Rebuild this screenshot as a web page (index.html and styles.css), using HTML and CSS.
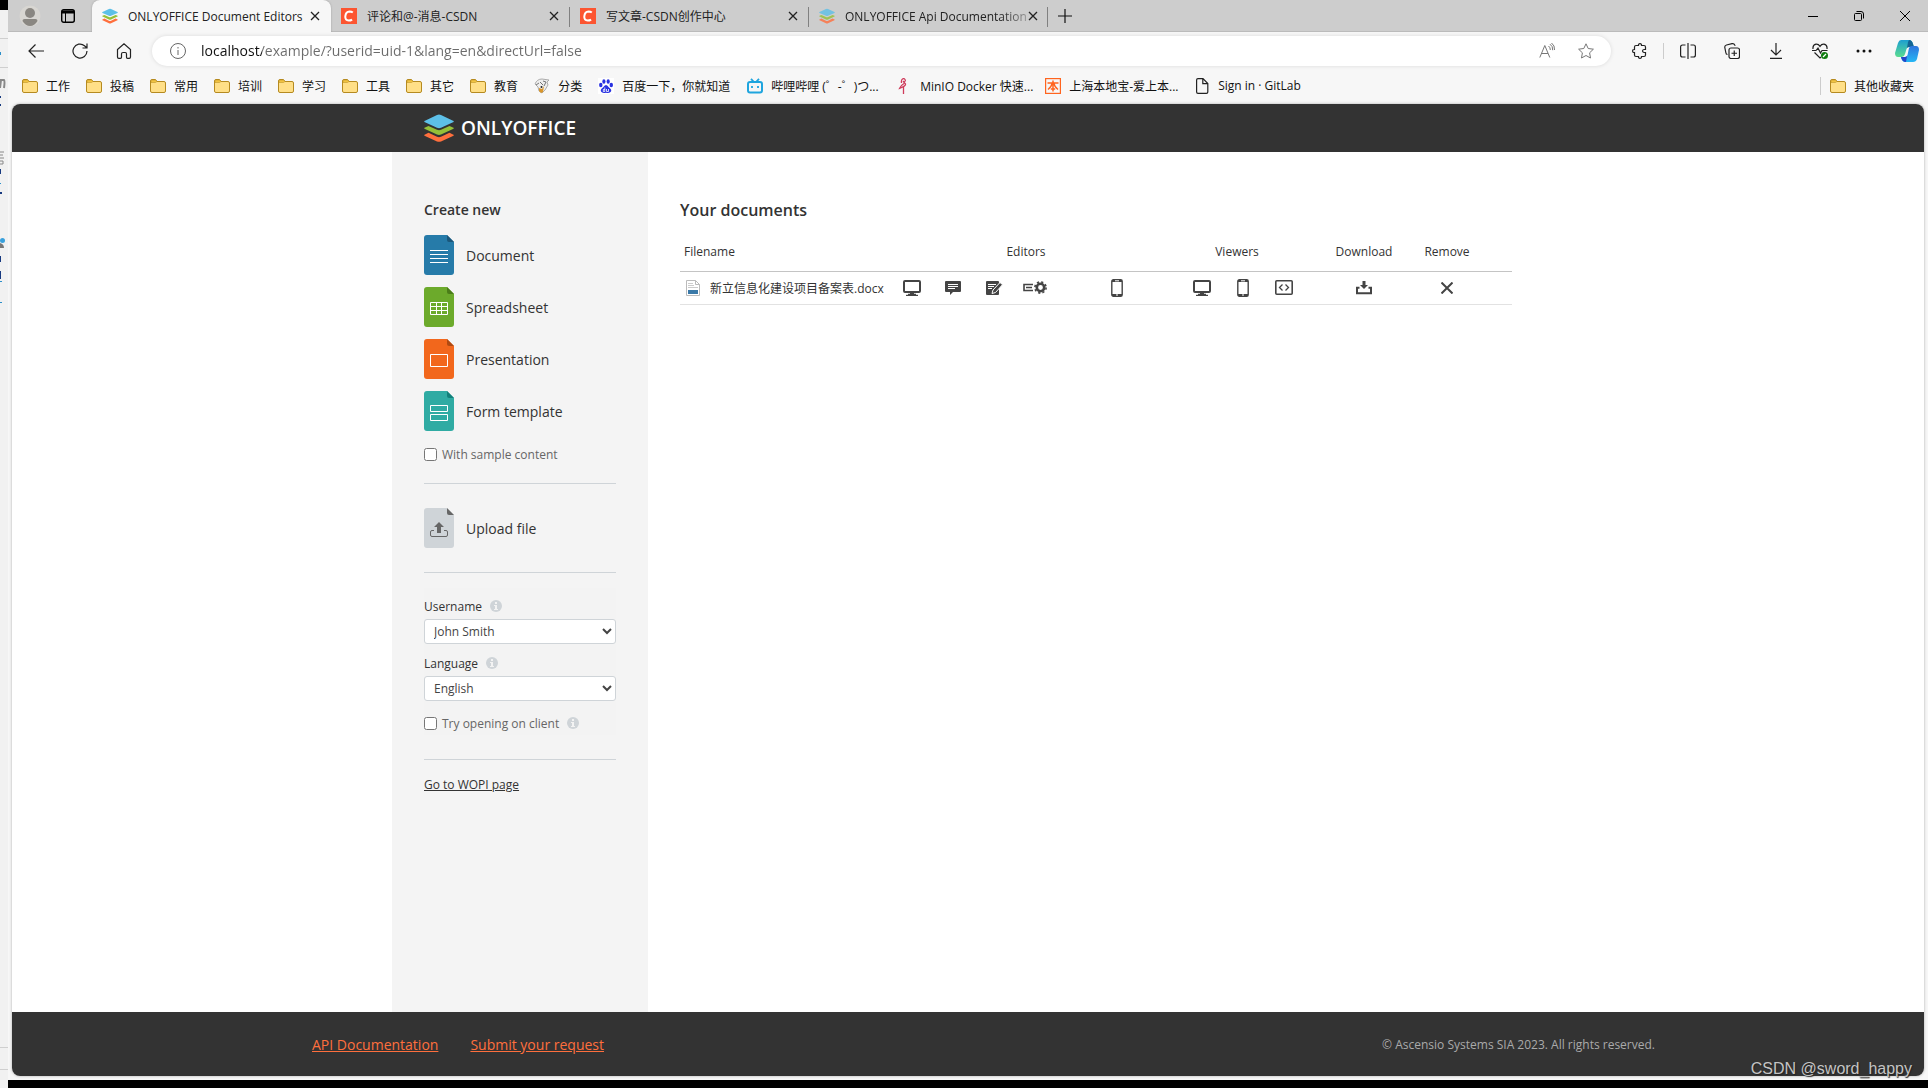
FILE: index.html
```html
<!DOCTYPE html>
<html lang="en">
  <head>
    <meta charset="UTF-8" />
    <meta name="viewport" content="width=device-width, initial-scale=1.0" />
    <title>ONLYOFFICE Document Editors</title>
    <link rel="stylesheet" href="styles.css">
  </head>
  <body>
    <!-- Shared icons -->
    <svg class="sprite" aria-hidden="true">
      <symbol id="stack" viewBox="0 0 30 28">
        <path fill="#ff6f3d" fill-rule="evenodd" d="M13 27.400 1 21.900q-1.500-.800 0-1.500l3.500-1.600 8.500 3.900q2 .900 4 0l8.500-3.900 3.500 1.600q1.500.700 0 1.500l-12 5.500q-2 .900-4 0z" />
        <path fill="#95c038" d="M13 20.500 1 15q-1.500-.800 0-1.500l3.500-1.600 8.500 3.900q2 .900 4 0l8.500-3.900 3.500 1.600q1.500.700 0 1.500l-12 5.500q-2 .900-4 0z" />
        <path fill="#5dc0e8" d="M13 13.700 1 8.200q-1.500-.800 0-1.500L13 1q2-.900 4 0l12 5.700q1.500.700 0 1.500l-12 5.500q-2 .900-4 0z" />
      </symbol>
      <symbol id="close" viewBox="0 0 10 10">
        <path d="M1 1l8 8M9 1l-8 8" fill="none" stroke="#222" stroke-width="1.300" />
      </symbol>
      <symbol id="folder" viewBox="0 0 16 16">
        <path d="M.5 3q0-1.500 1.500-1.500h3.500L7 3.500h7q1.500 0 1.500 1.500v8q0 1.500-1.500 1.500H2Q.5 14.500.5 13z" fill="#ffdf87" stroke="#b58a20" />
        <path d="M1 4.500h4.500L7 3.500 5.500 2H2Q1 2 1 3z" fill="#f2c341" stroke="#b58a20" stroke-width=".5" />
      </symbol>
      <symbol id="csdn" viewBox="0 0 16 16">
        <path fill="#fc5531" d="M0 0h16v16H0z" />
        <path d="M11.800 4.500Q10.500 3.400 8.500 3.400 4.800 3.600 4.300 8.300 4 12.400 7.600 12.600q2 0 3.500-1" fill="none" stroke="#fff" stroke-width="2" />
      </symbol>
      <symbol id="monitor" viewBox="0 0 18 16">
        <path d="M1 2q0-1 1-1h14q1 0 1 1v9q0 1-1 1H2q-1 0-1-1z" fill="none" stroke="#444" stroke-width="2" />
        <path d="M7 12h4v2h2v2H5v-2h2z" fill="#444" transform="translate(0 -.2)" />
        <path d="M3 14.800h12v1.200H3z" fill="#444" />
      </symbol>
      <symbol id="phone" viewBox="0 0 12 18">
        <rect x=".8" y=".8" width="10.400" height="16.400" rx="1.500" fill="none" stroke="#444" stroke-width="1.400" />
        <path d="M1 1h10v2H1zM1 15h10v2H1z" fill="#444" />
        <path d="M4 1.800h4M5 16h2" stroke="#fff" />
      </symbol>
      <symbol id="info" viewBox="0 0 12 12">
        <circle cx="6" cy="6" r="6" fill="#cfd4d8" />
        <path d="M5 2h2v2H5zM4 5h3v4h1v1H4V9h1V6H4z" fill="#f3f3f3" />
      </symbol>
    </svg>

    <!-- Edge of the window behind -->
    <svg class="backdrop" viewBox="0 0 8 1088" preserveAspectRatio="xMinYMin slice" aria-hidden="true">
      <path d="M0 0h8v10H0z" fill="#000" />
      <path d="M0 38.500h8M0 67.500h8M0 1047.500h8M0 1069.500h8" stroke="#cfcfcf" />
      <path d="M0 52h1v3H0z" fill="#2c8fc9" />
      <path d="M0 80h4q1 1 0 8M1 80 0 88" fill="none" stroke="#888" stroke-width="2" />
      <path d="M0 96h1v2H0zM0 104h1v2H0zM0 169h1v5H0zM0 192h2v2H0zM0 256h1v6H0zM0 271h1v8H0z" fill="#173a80" />
      <path d="M0 152h4M0 155h3M0 158h4M0 161h3v3H0" fill="none" stroke="#888" stroke-width="1" />
      <path d="M0 183.500h1M0 302.500h2M0 281.500h2" stroke="#2c8fc9" />
      <path d="M0 243q4 1 4 5H0z" fill="#777" />
      <circle cx="2.500" cy="240.500" r="2.500" fill="#39a0dc" />
    </svg>

    <div class="window">
      <!-- Tabs -->
      <div class="tab-bar">
        <button class="profile" aria-label="Profile">
          <svg width="22" height="22" viewBox="0 0 22 22"><circle cx="11" cy="11" r="10.500" fill="#d8d6d2" /><circle cx="11" cy="8" r="5" fill="#8a8782" /><path d="M3.500 16q0-2 2-2h11q2 0 2 2-3 5-7.500 5t-7.500-5z" fill="#8a8782" /></svg>
        </button>
        <button class="workspace" aria-label="Tab actions">
          <svg width="14" height="14" viewBox="0 0 14 14" fill="none" stroke="#000"><rect x=".7" y=".7" width="12.600" height="12.600" rx="2" stroke-width="1.400" /><path d="M1 3h12" stroke-width="3" /><path d="M4.500 4v9" /></svg>
        </button>
        <div class="tab active">
          <svg class="favicon"><use href="#stack" /></svg>
          <span class="tab-title">ONLYOFFICE Document Editors</span>
          <button class="tab-close" aria-label="Close tab"><svg width="10" height="10"><use href="#close" /></svg></button>
        </div>
        <div class="tab">
          <svg class="favicon"><use href="#csdn" /></svg>
          <span class="tab-title">评论和@-消息-CSDN</span>
          <button class="tab-close" aria-label="Close tab"><svg width="10" height="10"><use href="#close" /></svg></button>
        </div>
        <div class="tab">
          <svg class="favicon"><use href="#csdn" /></svg>
          <span class="tab-title">写文章-CSDN创作中心</span>
          <button class="tab-close" aria-label="Close tab"><svg width="10" height="10"><use href="#close" /></svg></button>
        </div>
        <div class="tab faded">
          <svg class="favicon"><use href="#stack" /></svg>
          <span class="tab-title">ONLYOFFICE Api Documentation</span>
          <button class="tab-close" aria-label="Close tab"><svg width="10" height="10"><use href="#close" /></svg></button>
        </div>
        <button class="new-tab" aria-label="New tab">
          <svg width="14" height="14" viewBox="0 0 14 14"><path d="M7 0v14M0 7h14" stroke="#111" stroke-width="1.200" /></svg>
        </button>
        <div class="window-controls">
          <button aria-label="Minimize"><svg width="10" height="10"><path d="M0 5.500h10" stroke="#000" /></svg></button>
          <button aria-label="Restore"><svg width="10" height="10" fill="none" stroke="#000"><rect x=".5" y="2.500" width="7" height="7" rx="1" /><path d="M2.500.500H7q2.500 0 2.500 2.500v4.500" /></svg></button>
          <button aria-label="Close"><svg width="10" height="10"><path d="M0 0l10 10M10 0 0 10" stroke="#000" /></svg></button>
        </div>
      </div>

      <!-- Address bar -->
      <div class="toolbar">
        <button class="nav-button" aria-label="Back"><svg width="16" height="16" viewBox="0 0 16 16"><path d="M16 8H1M7.500 1.500 1 8l6.500 6.500" /></svg></button>
        <button class="nav-button" aria-label="Refresh"><svg width="16" height="16" viewBox="0 0 16 16"><path d="M15 8a7 7 0 1 1-2.500-5.300L15 5M15 .5V5h-4.500" /></svg></button>
        <button class="nav-button" aria-label="Home"><svg width="16" height="16" viewBox="0 0 16 16"><path d="M1.500 6.500 8 .800l6.500 5.700V14q0 1.300-1.300 1.300h-1.700q-1 0-1-1V11q0-1.500-1.300-1.500H7Q5.500 9.500 5.500 11v3.300q0 1-1 1H2.800Q1.500 15.300 1.500 14z" /></svg></button>
        <div class="address">
          <svg width="16" height="16" viewBox="0 0 16 16" fill="none" stroke="#666"><circle cx="8" cy="8" r="7.500" /><path d="M8 7v5M8 4v1.500" /></svg>
          <input type="text" aria-label="Address" value="localhost/example/?userid=uid-1&amp;lang=en&amp;directUrl=false" />
          <svg width="16" height="16" viewBox="0 0 16 16" fill="none" stroke="#777"><path d="M.8 14.500 5.800 2.500l5 12M2.500 10.500h6.500M9.500 3q2 1.500 1.800 4M11 1.200q3 2 2.700 6M12.500 0q3.500 2.500 3 7" /></svg>
          <svg width="16" height="16" viewBox="0 0 16 16" fill="none" stroke="#777" stroke-linejoin="round"><path d="M8 .8l2.200 4.700 5.200.700-3.800 3.600.900 5.200L8 12.500 3.500 15l.9-5.200L.6 6.200l5.200-.7z" /></svg>
        </div>
        <div class="tools">
          <button class="nav-button" aria-label="Extensions"><svg width="16" height="16" viewBox="0 0 16 16"><path d="M4 2.500h2.500Q6.300.600 8 .600t1.500 1.900H12q1.500 0 1.500 1.500v2.500H12q-1.500.300-1.500 1.500t1.500 1.500h1.500V12q0 1.500-1.500 1.500H9.500Q9.700 15.400 8 15.400t-1.500-1.900H4q-1.500 0-1.500-1.500V9.500Q.6 9.700.6 8t1.900-1.500V4Q2.500 2.500 4 2.500z" /></svg></button>
          <span class="divider"></span>
          <button class="nav-button" aria-label="Split screen"><svg width="16" height="16" viewBox="0 0 16 16"><path d="M8 0v16M5.500 2H2.500Q.6 2 .6 4v8q0 2 1.900 2h3M10.500 2h3q1.900 0 1.900 2v8q0 2-1.900 2h-3" /></svg></button>
          <button class="nav-button" aria-label="Collections"><svg width="16" height="16" viewBox="0 0 16 16"><rect x="5" y="5" width="10.500" height="10.500" rx="2" /><path d="M10.250 7.500v5.500M7.500 10.250H13M3.500 11.500Q2 11.500 1.800 9.500L.8 4.500Q.5 2.500 2.500 2L8 .700q2-.400 2.800 1.300l.4.800" /></svg></button>
          <button class="nav-button" aria-label="Downloads"><svg width="16" height="16" viewBox="0 0 16 16"><path d="M8 0v12M3 7l5 5 5-5M2 15.400h12" /></svg></button>
          <button class="nav-button" aria-label="Browser essentials"><svg width="16" height="16" viewBox="0 0 16 16"><path d="M1 6Q.5 2 4 1.200 6.500 1 8 3.300 9.500 1 12 1.200 15.500 2 15 6M0 7.500h4L6 5l2.500 5L10 7.500h5.500M2.500 9.500 8 15l1-1" /><circle cx="12.500" cy="12.500" r="3.500" fill="#107c10" stroke="none" /><path d="M11 14l3-3" stroke="#fff" /></svg></button>
          <button class="nav-button" aria-label="Settings and more"><svg width="16" height="16" viewBox="0 0 16 16"><g fill="#111" stroke="none"><circle cx="2" cy="8" r="1.500" /><circle cx="8" cy="8" r="1.500" /><circle cx="14" cy="8" r="1.500" /></g></svg></button>
          <button class="nav-button copilot" aria-label="Copilot">
            <svg width="24" height="24" viewBox="0 0 24 24">
              <defs>
                <linearGradient id="cpA" x2="0" y2="1"><stop stop-color="#1d9fd0" /><stop offset="1" stop-color="#5bdc90" /></linearGradient>
                <linearGradient id="cpB" x2="0" y2="1"><stop stop-color="#2d74dd" /><stop offset="1" stop-color="#25b7f5" /></linearGradient>
              </defs>
              <path d="M6 1h8q3 0 4 4l1 3h-5q-2 0-2.500 2L10 15q-.8 3-3 3H3q-3 0-3-4L3 4q1-3 3-3z" fill="url(#cpA)" />
              <path d="M14 1q3 0 4 4l1 3h-5q-1 0-2 1l1-6z" fill="#136494" />
              <path d="M18 23h-8q-3 0-4-5h4q2 0 2.500-2L14 9q.7-2 3-2h4q3 0 3 4l-2 9q-1 3-4 3z" fill="url(#cpB)" />
              <path d="M6 18h4q1 0 2-1l-1 6q-4 0-5-5z" fill="#2445c8" />
            </svg>
          </button>
        </div>
      </div>

      <!-- Bookmarks -->
      <nav class="bookmarks">
        <a href="#"><svg><use href="#folder" /></svg><span>工作</span></a>
        <a href="#"><svg><use href="#folder" /></svg><span>投稿</span></a>
        <a href="#"><svg><use href="#folder" /></svg><span>常用</span></a>
        <a href="#"><svg><use href="#folder" /></svg><span>培训</span></a>
        <a href="#"><svg><use href="#folder" /></svg><span>学习</span></a>
        <a href="#"><svg><use href="#folder" /></svg><span>工具</span></a>
        <a href="#"><svg><use href="#folder" /></svg><span>其它</span></a>
        <a href="#"><svg><use href="#folder" /></svg><span>教育</span></a>
        <a href="#"><svg viewBox="0 0 16 16"><path d="M1 6q2-5 7-5l7 1-2 2 1 3-3 5-3 3-3-2-1-4z" fill="#eee" stroke="#999" stroke-width=".8" /><path d="M5 10l3 1 2-3-1 6-2 1-2-2z" fill="#d9962b" /><path d="M9 3l3 1-2 4M5 5l-3 2M6 4l3 3" stroke="#777" fill="none" /><circle cx="7.500" cy="9" r="1" fill="#222" /></svg><span>分类</span></a>
        <a href="#" class="wide"><svg viewBox="0 0 16 16" fill="#2932e1"><path d="M0 0h16v16H0z" fill="#fff" /><ellipse cx="2.800" cy="7" rx="1.700" ry="2.300" /><ellipse cx="5.900" cy="3.500" rx="1.600" ry="2.300" /><ellipse cx="10.200" cy="3.500" rx="1.600" ry="2.300" /><ellipse cx="13.300" cy="7" rx="1.700" ry="2.300" /><path d="M8 7q1.500 0 3 2.500 3 2 2 4t-5 1.200q-4 .800-5-1.200t2-4Q6.500 7 8 7z" /><path d="M6.800 9.500v4H5.300v-2h1.500M8.500 11v2.500h2V11" fill="none" stroke="#fff" stroke-width=".8" /></svg><span>百度一下，你就知道</span></a>
        <a href="#" class="wide"><svg viewBox="0 0 16 16" fill="none" stroke="#1fa5de" stroke-width="2"><rect x="1" y="4" width="14" height="10.500" rx="2" /><path d="M4 .8l2.500 2.700M12 .8 9.500 3.500M5 8v2M11 8v2" stroke-width="1.800" /></svg><span>哔哩哔哩 (゜-゜)つ...</span></a>
        <a href="#" class="wide"><svg viewBox="0 0 16 16" fill="none" stroke="#cf3c5c"><path d="M5.500 5q-.5-3 1-4t2.500.500-1 2.500M7 3l2.500 3q.5 2-6 4.500 1-3 4.500-5M7.500 9v7" stroke-width="1.300" /></svg><span>MinIO Docker 快速...</span></a>
        <a href="#" class="wide"><svg viewBox="0 0 16 16" fill="none" stroke="#ff641e"><rect x=".6" y=".6" width="14.800" height="14.800" stroke-width="1.200" /><path d="M2.500 5h11M8 2.500v11M7 5.500Q6.500 9 3 11.500M9 5.500q.5 3.500 4 6M5.800 11h4.400" stroke-width="1.500" /></svg><span>上海本地宝-爱上本...</span></a>
        <a href="#"><svg viewBox="0 0 16 16" fill="none" stroke="#222" stroke-width="1.200"><path d="M2.600 2q0-1.400 1.400-1.400h5L13.800 5.500V14q0 1.400-1.400 1.400H4q-1.400 0-1.400-1.400zM8.800.600v5h5" /></svg><span>Sign in · GitLab</span></a>
        <a href="#" class="other"><svg><use href="#folder" /></svg><span>其他收藏夹</span></a>
      </nav>

      <!-- Page -->
      <div class="page">
        <header>
          <div class="container">
            <a href="#" class="logo"><svg width="30" height="28"><use href="#stack" /></svg>ONLYOFFICE</a>
          </div>
        </header>

        <main class="container">
          <aside>
            <h3>Create new</h3>
            <a href="#" class="create">
              <svg width="30" height="40"><path d="M3 0h20l7 7v30q0 3-3 3H3q-3 0-3-3V3q0-3 3-3z" fill="#267ba9" /><path d="M23 0v5q0 2 2 2h5z" fill="#1b577a" /><path d="M6 15.500h18M6 19.500h18M6 23.500h18M6 27.500h18" stroke="#fff" /></svg>
              Document
            </a>
            <a href="#" class="create">
              <svg width="30" height="40"><path d="M3 0h20l7 7v30q0 3-3 3H3q-3 0-3-3V3q0-3 3-3z" fill="#6caa2b" /><path d="M23 0v5q0 2 2 2h5z" fill="#4b7d19" /><path d="M6.500 15.500h17v12h-17zM6 19.500h18M6 23.500h18M12.500 15v13M17.500 15v13" stroke="#fff" fill="none" /></svg>
              Spreadsheet
            </a>
            <a href="#" class="create">
              <svg width="30" height="40"><path d="M3 0h20l7 7v30q0 3-3 3H3q-3 0-3-3V3q0-3 3-3z" fill="#f2671c" /><path d="M23 0v5q0 2 2 2h5z" fill="#af4a12" /><path d="M6.500 15.500h17v12h-17z" stroke="#fff" fill="none" /></svg>
              Presentation
            </a>
            <a href="#" class="create">
              <svg width="30" height="40"><path d="M3 0h20l7 7v30q0 3-3 3H3q-3 0-3-3V3q0-3 3-3z" fill="#2faba3" /><path d="M23 0v5q0 2 2 2h5z" fill="#12807a" /><path d="M6.500 14.500h17v6h-17zM6.500 23.500h17v6h-17z" stroke="#fff" fill="none" /></svg>
              Form template
            </a>
            <label class="check"><input type="checkbox" />With sample content</label>

            <div class="upload">
              <a href="#" class="create">
                <svg width="30" height="40"><path d="M3 0h20l7 7v30q0 3-3 3H3q-3 0-3-3V3q0-3 3-3z" fill="#cfd4d8" /><path d="M23 0l7 7V0z" fill="#f4f4f4" /><path d="M23 0v5q0 2 2 2h5z" fill="#666" /><path d="M15 14l5 5h-3v6h-4v-6h-3z" fill="#666" /><path d="M10 22.500H8q-1.500 0-1.500 1.500v3q0 1.500 1.500 1.500h14q1.500 0 1.500-1.500v-3q0-1.500-1.500-1.500h-2" stroke="#666" fill="none" /></svg>
                Upload file
              </a>
            </div>

            <div class="settings">
              <div class="field-name">
                <label for="user">Username</label>
                <svg width="12" height="12"><use href="#info" /></svg>
              </div>
              <select id="user"><option>John Smith</option></select>
              <div class="field-name">
                <label for="language">Language</label>
                <svg width="12" height="12"><use href="#info" /></svg>
              </div>
              <select id="language"><option>English</option></select>
              <label class="check"><input type="checkbox" />Try opening on client <svg width="12" height="12"><use href="#info" /></svg></label>
            </div>

            <a href="#" class="wopi">Go to WOPI page</a>
          </aside>

          <section class="documents">
            <h2>Your documents</h2>
            <table>
              <thead>
                <tr>
                  <th class="col-name">Filename</th>
                  <th class="col-editors">Editors</th>
                  <th class="col-viewers">Viewers</th>
                  <th class="col-download">Download</th>
                  <th class="col-remove">Remove</th>
                  <th></th>
                </tr>
              </thead>
              <tbody>
                <tr>
                  <td>
                    <a href="#" class="file">
                      <svg width="14" height="16"><path d="M.5.500h9l4 4v11H.5z" fill="#fff" stroke="#bbb" /><path d="M9.500.500v4h4" fill="none" stroke="#bbb" /><path d="M2 3.500h5M2 5.500h6M2 7.500h10" stroke="#ccc" /><path d="M2 10h10v4H2z" fill="#3a79a8" /></svg>
                      <span>新立信息化建设项目备案表.docx</span>
                    </a>
                  </td>
                  <td>
                    <div class="actions editors">
                      <a href="#" aria-label="Open in editor"><svg width="18" height="16"><use href="#monitor" /></svg></a>
                      <a href="#" aria-label="Comment"><svg width="16" height="14"><path d="M1 0h14q1 0 1 1v9q0 1-1 1H8l-3 3v-3H1q-1 0-1-1V1q0-1 1-1z" fill="#444" /><path d="M3 3.500h10M3 5.500h10M3 7.500h7" stroke="#fff" /></svg></a>
                      <a href="#" aria-label="Review"><svg width="18" height="14" viewBox="-1 0 18 14"><path d="M1 0h11q1 0 1 1v12q0 1-1 1H1q-1 0-1-1V1q0-1 1-1z" fill="#444" /><path d="M2 3.500h8M2 5.500h6M2 7.500h4" stroke="#fff" /><path d="M6 12.500l1-3.500 7-7.500 2.500 2.200-7 7.800z" fill="#444" stroke="#fff" /></svg></a>
                      <a href="#" aria-label="Fill forms"><svg width="24" height="13" fill="none" stroke="#444"><path d="M10 3.500H1v6h9M3 6.500h6" stroke-width="1.600" /><circle cx="17.500" cy="6.500" r="3.700" stroke-width="2.600" /><circle cx="17.500" cy="6.500" r="5.600" stroke-width="1.600" stroke-dasharray="2.200 2.200" /></svg></a>
                      <a href="#" aria-label="Open in mobile editor" class="last"><svg width="12" height="18"><use href="#phone" /></svg></a>
                    </div>
                  </td>
                  <td>
                    <div class="actions viewers">
                      <a href="#" aria-label="View"><svg width="18" height="16"><use href="#monitor" /></svg></a>
                      <a href="#" aria-label="View on mobile"><svg width="12" height="18"><use href="#phone" /></svg></a>
                      <a href="#" aria-label="Embedded view"><svg width="18" height="15" fill="none" stroke="#444"><rect x=".8" y=".8" width="16.400" height="13.400" rx="1" stroke-width="1.600" /><path d="M7.500 4.500l-3 3 3 3M10.500 4.500l3 3-3 3" stroke-width="1.300" /></svg></a>
                    </div>
                  </td>
                  <td class="center"><a href="#" aria-label="Download"><svg width="16" height="14"><path d="M6.500 0h3v4H12L8 8 4 4h2.500z" fill="#444" /><path d="M3.500 6.800H1v5.400h14V6.800h-2.500" fill="none" stroke="#444" stroke-width="2" /></svg></a></td>
                  <td class="center"><a href="#" aria-label="Remove"><svg width="12" height="12"><path d="M.5.500l11 11M11.500.500l-11 11" stroke="#444" stroke-width="2" /></svg></a></td>
                  <td></td>
                </tr>
              </tbody>
            </table>
          </section>
        </main>

        <footer>
          <a href="#">API Documentation</a>
          <a href="#">Submit your request</a>
          <span>© Ascensio Systems SIA 2023. All rights reserved.</span>
        </footer>
      </div>
    </div>
    <div class="watermark">CSDN @sword_happy</div>
  </body>
</html>
```
FILE: styles.css
```css
/* General Styling */
* {
  box-sizing: border-box;
}

body {
  margin: 0;
  height: 100vh;
  display: flex;
  position: relative;
  overflow: hidden;
  background-color: #f1f1f1;
  color: #333;
  font-family: "Open Sans", "Noto Sans CJK SC", sans-serif;
  font-size: 12px;
}

a {
  color: inherit;
  text-decoration: none;
}

button {
  display: flex;
  align-items: center;
  justify-content: center;
  padding: 0;
  border: none;
  background: none;
  cursor: pointer;
}

svg {
  display: block;
  flex: none;
}

.sprite {
  position: absolute;
  width: 0;
  height: 0;
}

.backdrop {
  width: 8px;
  height: 100%;
}

.window {
  flex: 1;
  min-width: 0;
  display: flex;
  flex-direction: column;
  background-color: #f7f7f7;
  border-bottom: 8px solid #000;
}

/* Tabs */
.tab-bar {
  display: flex;
  height: 32px;
  background-color: #cdcdcd;
  box-shadow: inset 0 -1px 0 #bbb;
  color: #222;
}

.tab-bar button {
  height: 32px;
}

.profile {
  width: 44px;
}

.workspace {
  width: 32px;
  margin-right: 8px;
}

.tab {
  display: flex;
  align-items: center;
  width: 239px;
  height: 32px;
  padding: 0 8px 0 10px;
  position: relative;
}

.tab::after {
  content: "";
  position: absolute;
  right: 0;
  top: 7px;
  height: 20px;
  border-right: 1px solid #808080;
}

.tab.active {
  background-color: #f7f7f7;
  border-radius: 8px 8px 0 0;
  box-shadow: 0 0 2px #999;
  clip-path: inset(0 -3px 0 -3px);
}

.tab.active::after {
  display: none;
}

.favicon {
  width: 16px;
  height: 16px;
  margin-right: 10px;
}

.faded .favicon {
  opacity: 0.8;
}

.tab-title {
  flex: 1;
  white-space: nowrap;
}

.faded .tab-title {
  mask-image: linear-gradient(90deg, #000 85%, rgba(0, 0, 0, 0.3));
}

.tab-close {
  width: 16px;
}

.new-tab {
  width: 34px;
}

.window-controls {
  display: flex;
  margin-left: auto;
}

.window-controls button {
  width: 46px;
}

/* Address bar */
.toolbar {
  display: flex;
  align-items: center;
  height: 38px;
  padding: 0 0 0 6px;
}

.nav-button {
  width: 44px;
  height: 32px;
}

.nav-button svg {
  fill: none;
  stroke: #222;
  stroke-width: 1.2;
}

.nav-button.copilot {
  width: 42px;
}

.copilot svg {
  stroke: none;
}

.address {
  flex: 1;
  display: flex;
  align-items: center;
  gap: 23px;
  height: 30px;
  margin-left: 6px;
  padding: 0 17px 0 18px;
  border-radius: 15px;
  background-color: #fff;
  box-shadow: 0 0 4px rgba(0, 0, 0, 0.12);
}

.address input {
  flex: 1;
  margin-left: -8px;
  padding: 0;
  border: none;
  outline: none;
  font-family: "Open Sans", sans-serif;
  font-size: 14px;
  line-height: 20px;
  color: transparent;
  background: linear-gradient(90deg, #111 61px, #6b6b6b 61px);
  background-clip: text;
}

.tools {
  display: flex;
  align-items: center;
  padding-left: 7px;
}

.divider {
  height: 16px;
  margin: 0 2px 0 1px;
  border-left: 1px solid #ccc;
}

/* Bookmarks */
.bookmarks {
  display: flex;
  align-items: center;
  gap: 16px;
  height: 34px;
  padding: 0 14px 3px;
  color: #111;
  white-space: nowrap;
}

.bookmarks a {
  display: flex;
  align-items: center;
  gap: 8px;
}

.bookmarks svg {
  width: 16px;
  height: 16px;
}

.bookmarks .wide {
  width: 133px;
}

.bookmarks .other {
  margin-left: auto;
  padding-left: 9px;
  border-left: 1px solid #ccc;
}

/* Page */
.page {
  flex: 1;
  display: flex;
  flex-direction: column;
  margin: 0 4px 4px;
  border-radius: 8px;
  overflow: hidden;
  background-color: #fff;
  box-shadow: 0 0 3px rgba(0, 0, 0, 0.3);
}

.container {
  width: 100%;
  max-width: 1152px;
  margin: 0 auto;
}

header {
  background-color: #333;
}

.logo {
  display: flex;
  align-items: center;
  gap: 7px;
  height: 48px;
  padding-left: 32px;
  color: #fff;
  font-size: 19px;
  font-weight: 600;
}

main {
  flex: 1;
  display: flex;
}

aside {
  width: 256px;
  padding: 48px 32px 0;
  background-color: #f4f4f4;
}

h3 {
  margin: 0 0 15px;
  font-size: 14px;
  font-weight: 600;
  line-height: 20px;
}

.create {
  display: flex;
  align-items: center;
  gap: 12px;
  height: 40px;
  margin-bottom: 12px;
  font-size: 14px;
}

.check {
  display: flex;
  align-items: center;
  gap: 5px;
  height: 16px;
  margin-top: 15px;
  color: #666;
}

.check input {
  width: 13px;
  height: 13px;
  margin: 0;
}

.check svg {
  margin-left: 3px;
}

.upload {
  margin: 21px 0 15px;
  padding: 24px 0 12px;
  border-top: 1px solid #cfd4d8;
  border-bottom: 1px solid #cfd4d8;
}

.settings {
  padding: 7px 0 4px;
  background-color: #f3f3f3;
}

.field-name {
  display: flex;
  align-items: center;
  gap: 8px;
  height: 24px;
  padding-bottom: 2px;
}

select {
  display: block;
  width: 100%;
  height: 25px;
  margin-bottom: 8px;
  padding: 0 5px;
  border: 1px solid #cfd4d8;
  border-radius: 3px;
  background-color: #fff;
  color: #444;
  font-family: "Open Sans", sans-serif;
  font-size: 12px;
}

.settings .check {
  margin-top: 14px;
}

.wopi {
  display: block;
  margin-top: 24px;
  padding-top: 16px;
  border-top: 1px solid #cfd4d8;
  line-height: 18px;
  text-decoration: underline;
}

/* Documents */
.documents {
  flex: 1;
  padding: 48px 32px 0;
}

h2 {
  margin: 0 0 20px;
  font-size: 16px;
  font-weight: 600;
  line-height: 20px;
}

table {
  width: 100%;
  max-width: 832px;
  border-collapse: collapse;
  table-layout: fixed;
}

th {
  height: 31px;
  padding: 0 0 8px;
  border-bottom: 1px solid #c4c4c4;
  font-weight: 400;
}

td {
  height: 33px;
  padding: 0;
  border-bottom: 1px solid #e2e2e2;
}

.col-name {
  width: 211px;
  padding-left: 4px;
  text-align: left;
}

.col-editors {
  width: 270px;
}

.col-viewers {
  width: 152px;
}

.col-download {
  width: 102px;
}

.col-remove {
  width: 64px;
}

.file {
  display: flex;
  align-items: center;
  gap: 10px;
  padding-left: 6px;
  white-space: nowrap;
}

.actions {
  display: grid;
  grid-template-columns: repeat(6, 41px);
  justify-items: center;
  align-items: center;
}

.actions .last {
  grid-column: 6;
}

.viewers {
  grid-template-columns: repeat(3, 41px);
  padding-left: 20px;
}

.center svg {
  margin: 0 auto;
}

/* Footer */
footer {
  display: flex;
  align-items: center;
  gap: 32px;
  height: 64px;
  padding: 0 269px 0 300px;
  background-color: #333;
  color: #aaa;
}

footer a {
  color: #ff6f3d;
  font-size: 14px;
  text-decoration: underline;
}

footer span {
  margin-left: auto;
}

.watermark {
  position: absolute;
  right: 16px;
  bottom: 9px;
  color: #c4c4c4;
  font-family: "Liberation Sans", sans-serif;
  font-size: 16px;
  line-height: 20px;
  text-shadow: 1px 1px 1px #222;
}
```
